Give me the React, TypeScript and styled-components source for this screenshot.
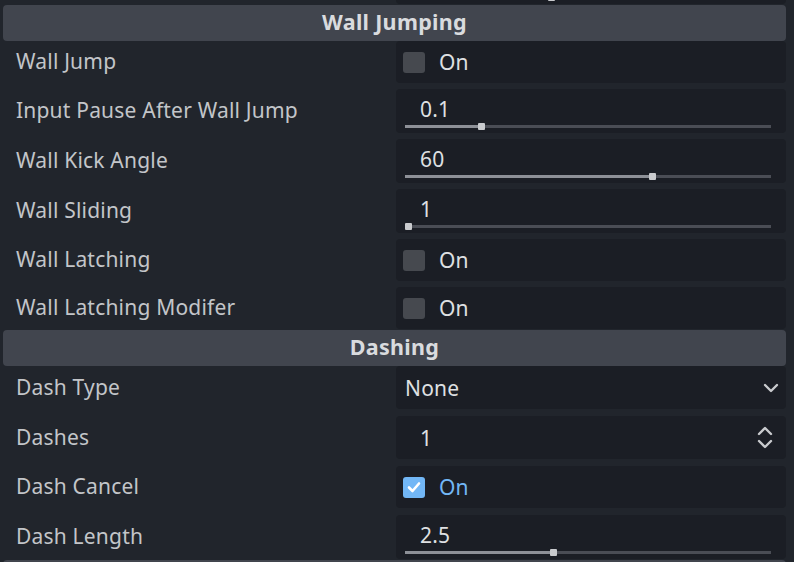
import React from 'react';
import styled, { createGlobalStyle } from 'styled-components';

const GlobalStyle = createGlobalStyle`
  html, body {
    margin: 0;
    padding: 0;
    background: #21252c;
    overflow: hidden;
  }
  * { box-sizing: border-box; }
`;

const Inspector = styled.div`
  width: 794px;
  height: 562px;
  overflow: hidden;
  background: #21252c;
  font-family: "Noto Sans", "Open Sans", sans-serif;
  font-size: 21px;
  letter-spacing: 0.2px;
`;

// shifted up so the previous row's bottom edge peeks in at the top
const List = styled.div`
  display: flex;
  flex-direction: column;
  margin-top: -40px;
`;

const SectionHeader = styled.div`
  height: 36px;
  margin: 1px 8px 0 3px;
  flex-shrink: 0;
  background: #41454e;
  border-radius: 4px;
  display: flex;
  align-items: center;
  justify-content: center;
  color: #d9dbde;
  font-weight: 700;
  font-size: 21.5px;
  letter-spacing: 0.3px;
  padding-bottom: 3px;
`;

const Row = styled.div<{ $gap: number }>`
  display: grid;
  grid-template-columns: 396px 390px;
  align-items: center;
  margin-top: ${(p) => p.$gap}px;
  flex-shrink: 0;
`;

const Label = styled.div`
  padding-left: 16px;
  color: #c3c5c9;
  white-space: nowrap;
  margin-top: -2px;
`;

const ValueBox = styled.div<{ $h: number }>`
  height: ${(p) => p.$h}px;
  background: #1b1e25;
  border-radius: 4px;
  color: #dfe0e2;
  display: flex;
  align-items: center;
  position: relative;
`;

const SliderBox = styled(ValueBox)`
  flex-direction: column;
  align-items: stretch;
  padding: 7px 15px 0 9px;
`;

const SliderValue = styled.div`
  height: 27px;
  line-height: 27px;
  padding-left: 15px;
`;

const Track = styled.div`
  position: relative;
  margin-top: 2px;
  height: 3px;
  background: #4a4d55;
`;

const TrackFill = styled.div`
  height: 100%;
  background: #8d9097;
`;

const Grabber = styled.div`
  position: absolute;
  top: -2px;
  width: 7px;
  height: 7px;
  margin-left: -3px;
  background: #c9cbce;
  border-radius: 1px;
`;

const CheckBoxBox = styled(ValueBox)`
  padding-left: 7px;
  gap: 14px;
`;

const Check = styled.div<{ $on: boolean }>`
  width: 22px;
  height: 21px;
  border-radius: 3px;
  background: ${(p) => (p.$on ? '#72b7f6' : '#46494f')};
  display: flex;
  align-items: center;
  justify-content: center;
`;

const CheckText = styled.span<{ $on: boolean }>`
  color: ${(p) => (p.$on ? '#72b7f6' : '#dfe0e2')};
  margin-top: -1px;
`;

const PlainBox = styled(ValueBox)<{ $pad: number }>`
  padding-left: ${(p) => p.$pad}px;
  justify-content: space-between;
  padding-right: ${(p) => (p.$pad > 10 ? 13 : 7)}px;
`;

const BoxText = styled.span`
  margin-top: 1px;
`;

const Arrows = styled.div`
  display: flex;
  flex-direction: column;
  gap: 3px;
`;

function Slider({ value, frac }: { value: string; frac: number }) {
  return (
    <SliderBox $h={44}>
      <SliderValue>{value}</SliderValue>
      <Track>
        <TrackFill style={{ width: `${frac * 100}%` }} />
        <Grabber style={{ left: `${frac * 100}%` }} />
      </Track>
    </SliderBox>
  );
}

function CheckBox({ on }: { on: boolean }) {
  return (
    <CheckBoxBox $h={42}>
      <Check $on={on}>
        {on && (
          <svg width="14" height="12" viewBox="0 0 14 12">
            <polyline points="2,6.5 5.5,10 12,2.5" fill="none" stroke="#ffffff" strokeWidth="2.6" strokeLinecap="round" strokeLinejoin="round" />
          </svg>
        )}
      </Check>
      <CheckText $on={on}>On</CheckText>
    </CheckBoxBox>
  );
}

function Chevron({ up }: { up?: boolean }) {
  return (
    <svg width="16" height="10" viewBox="0 0 16 10">
      <polyline
        points={up ? '2,8 8,2 14,8' : '2,2 8,8 14,2'}
        fill="none"
        stroke="#c9cbce"
        strokeWidth="2.4"
        strokeLinecap="round"
        strokeLinejoin="round"
      />
    </svg>
  );
}

type Prop =
  | { kind: 'slider'; label: string; value: string; frac: number }
  | { kind: 'check'; label: string; on: boolean }
  | { kind: 'select'; label: string; value: string }
  | { kind: 'spin'; label: string; value: string };

function PropertyRow({ prop, gap }: { prop: Prop; gap: number }) {
  let editor: React.ReactNode = null;
  if (prop.kind === 'slider') editor = <Slider value={prop.value} frac={prop.frac} />;
  if (prop.kind === 'check') editor = <CheckBox on={prop.on} />;
  if (prop.kind === 'select')
    editor = (
      <PlainBox $h={43} $pad={9}>
        <BoxText>{prop.value}</BoxText>
        <Chevron />
      </PlainBox>
    );
  if (prop.kind === 'spin')
    editor = (
      <PlainBox $h={43} $pad={24}>
        <BoxText>{prop.value}</BoxText>
        <Arrows>
          <Chevron up />
          <Chevron />
        </Arrows>
      </PlainBox>
    );
  return (
    <Row $gap={gap}>
      <Label>{prop.label}</Label>
      {editor}
    </Row>
  );
}

const wallJumping: Prop[] = [
  { kind: 'check', label: 'Wall Jump', on: false },
  { kind: 'slider', label: 'Input Pause After Wall Jump', value: '0.1', frac: 0.208 },
  { kind: 'slider', label: 'Wall Kick Angle', value: '60', frac: 0.675 },
  { kind: 'slider', label: 'Wall Sliding', value: '1', frac: 0.008 },
  { kind: 'check', label: 'Wall Latching', on: false },
  { kind: 'check', label: 'Wall Latching Modifer', on: false },
];

const dashing: Prop[] = [
  { kind: 'select', label: 'Dash Type', value: 'None' },
  { kind: 'spin', label: 'Dashes', value: '1' },
  { kind: 'check', label: 'Dash Cancel', on: true },
  { kind: 'slider', label: 'Dash Length', value: '2.5', frac: 0.404 },
];

export default function App() {
  return (
    <Inspector>
      <GlobalStyle />
      <List>
        <Row $gap={0}>
          <Label />
          <Slider value="" frac={0.4} />
        </Row>
        <SectionHeader>Wall Jumping</SectionHeader>
        {wallJumping.map((p, i) => (
          <PropertyRow key={p.label} prop={p} gap={i === 0 ? 0 : 6} />
        ))}
        <SectionHeader>Dashing</SectionHeader>
        {dashing.map((p, i) => (
          <PropertyRow key={p.label} prop={p} gap={i === 0 ? 0 : 7} />
        ))}
        <SectionHeader />
      </List>
    </Inspector>
  );
}
